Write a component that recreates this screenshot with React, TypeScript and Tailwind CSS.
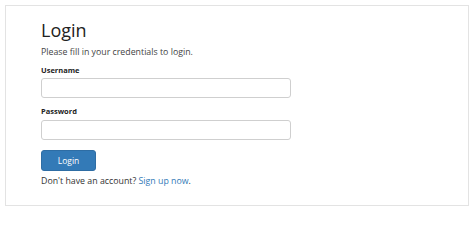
export default function App() {
  return (
    <div className="p-[5px] bg-white" style={{ fontFamily: '"Open Sans", "Noto Sans", sans-serif' }}>
      <div className="h-[201px] border border-[#e3e3e3] bg-white pl-[35px] pt-[14px] text-[#333]">
        <h1 className="text-[18px] leading-[20px] font-normal text-[#222]">Login</h1>
        <p className="mt-[6px] text-[8.8px] leading-[12px] text-[#444]">Please fill in your credentials to login.</p>
        <form onSubmit={(e) => e.preventDefault()}>
          <label className="mt-[7px] block text-[7.5px] leading-[10px] font-bold text-[#222]">Username</label>
          <input
            type="text"
            className="mt-[3px] block h-[20px] w-[250px] rounded-[3px] border border-[#cfcfcf] bg-white outline-none"
          />
          <label className="mt-[8px] block text-[7.5px] leading-[10px] font-bold text-[#222]">Password</label>
          <input
            type="password"
            className="mt-[4px] block h-[20px] w-[250px] rounded-[3px] border border-[#cfcfcf] bg-white outline-none"
          />
          <button
            type="submit"
            className="mt-[10px] block h-[21px] w-[55px] rounded-[3px] border border-[#2e6da4] bg-[#337ab7] text-[8.5px] leading-[19px] text-white"
          >
            Login
          </button>
        </form>
        <p className="mt-[4px] text-[8.8px] leading-[12px] text-[#333]">
          Don't have an account? <a href="#" className="text-[#337ab7]">Sign up now</a>.
        </p>
      </div>
    </div>
  );
}
